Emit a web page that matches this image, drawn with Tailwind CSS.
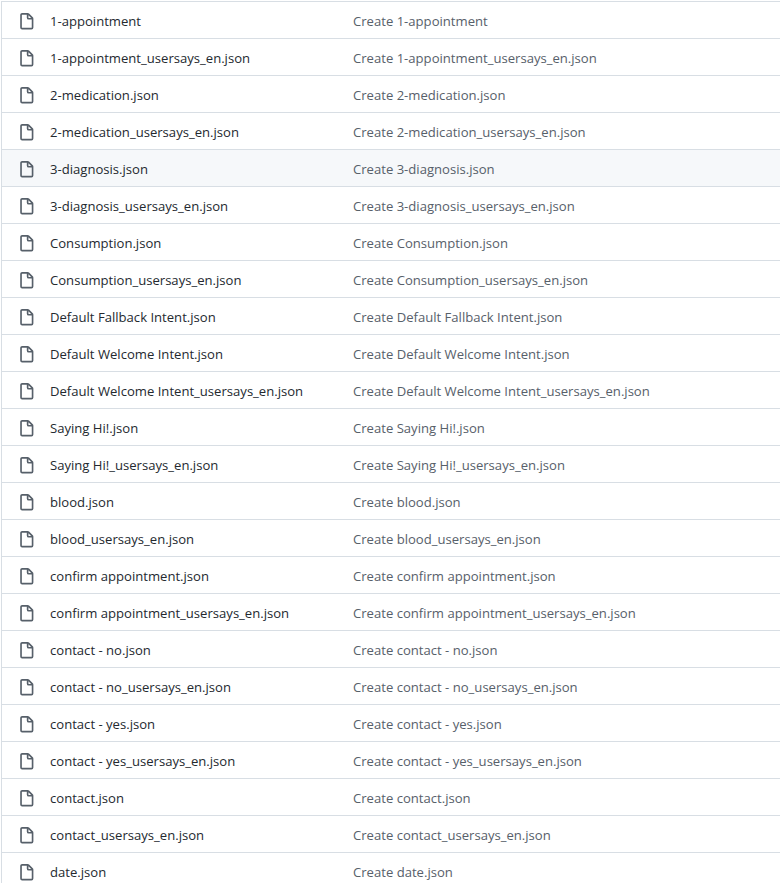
<!DOCTYPE html>
<html lang="en">
<head>
  <meta charset="UTF-8" />
  <title>Files</title>
  <script src="https://cdn.jsdelivr.net/npm/@tailwindcss/browser@4"></script>
</head>
<body class="bg-white font-['Open_Sans',sans-serif] text-[13.1px] overflow-hidden h-[883px]">
  <svg class="hidden"><symbol id="file" viewBox="0 0 16 16"><path fill="#57606a" d="M3.75 1.5a.25.25 0 00-.25.25v11.5c0 .138.112.25.25.25h8.5a.25.25 0 00.25-.25V6H9.75A1.75 1.75 0 018 4.25V1.5H3.75zm5.75.56v2.19c0 .138.112.25.25.25h2.19L9.5 2.06zM2 1.75C2 .784 2.784 0 3.75 0h5.086c.464 0 .909.184 1.237.513l3.414 3.414c.329.328.513.773.513 1.237v8.086A1.75 1.75 0 0112.25 15h-8.5A1.75 1.75 0 012 13.25V1.75z"/></symbol></svg>
  <div class="mt-px ml-px border-l border-t border-[#d8dee4]">
    <div class="flex items-center h-[37px] pt-[4px] border-b border-[#d8dee4]"><svg class="w-[17.6px] h-[17.6px] ml-4 shrink-0"><use href="#file"/></svg><span class="w-[317.4px] pl-[14.4px] text-[#24292f]">1-appointment</span><span class="text-[#57606a]">Create 1-appointment</span></div>
    <div class="flex items-center h-[37px] pt-[4px] border-b border-[#d8dee4]"><svg class="w-[17.6px] h-[17.6px] ml-4 shrink-0"><use href="#file"/></svg><span class="w-[317.4px] pl-[14.4px] text-[#24292f]">1-appointment_usersays_en.json</span><span class="text-[#57606a]">Create 1-appointment_usersays_en.json</span></div>
    <div class="flex items-center h-[37px] pt-[4px] border-b border-[#d8dee4]"><svg class="w-[17.6px] h-[17.6px] ml-4 shrink-0"><use href="#file"/></svg><span class="w-[317.4px] pl-[14.4px] text-[#24292f]">2-medication.json</span><span class="text-[#57606a]">Create 2-medication.json</span></div>
    <div class="flex items-center h-[37px] pt-[4px] border-b border-[#d8dee4]"><svg class="w-[17.6px] h-[17.6px] ml-4 shrink-0"><use href="#file"/></svg><span class="w-[317.4px] pl-[14.4px] text-[#24292f]">2-medication_usersays_en.json</span><span class="text-[#57606a]">Create 2-medication_usersays_en.json</span></div>
    <div class="flex items-center h-[37px] pt-[4px] border-b border-[#d8dee4] bg-[#f6f8fa]"><svg class="w-[17.6px] h-[17.6px] ml-4 shrink-0"><use href="#file"/></svg><span class="w-[317.4px] pl-[14.4px] text-[#24292f]">3-diagnosis.json</span><span class="text-[#57606a]">Create 3-diagnosis.json</span></div>
    <div class="flex items-center h-[37px] pt-[4px] border-b border-[#d8dee4]"><svg class="w-[17.6px] h-[17.6px] ml-4 shrink-0"><use href="#file"/></svg><span class="w-[317.4px] pl-[14.4px] text-[#24292f]">3-diagnosis_usersays_en.json</span><span class="text-[#57606a]">Create 3-diagnosis_usersays_en.json</span></div>
    <div class="flex items-center h-[37px] pt-[4px] border-b border-[#d8dee4]"><svg class="w-[17.6px] h-[17.6px] ml-4 shrink-0"><use href="#file"/></svg><span class="w-[317.4px] pl-[14.4px] text-[#24292f]">Consumption.json</span><span class="text-[#57606a]">Create Consumption.json</span></div>
    <div class="flex items-center h-[37px] pt-[4px] border-b border-[#d8dee4]"><svg class="w-[17.6px] h-[17.6px] ml-4 shrink-0"><use href="#file"/></svg><span class="w-[317.4px] pl-[14.4px] text-[#24292f]">Consumption_usersays_en.json</span><span class="text-[#57606a]">Create Consumption_usersays_en.json</span></div>
    <div class="flex items-center h-[37px] pt-[4px] border-b border-[#d8dee4]"><svg class="w-[17.6px] h-[17.6px] ml-4 shrink-0"><use href="#file"/></svg><span class="w-[317.4px] pl-[14.4px] text-[#24292f]">Default Fallback Intent.json</span><span class="text-[#57606a]">Create Default Fallback Intent.json</span></div>
    <div class="flex items-center h-[37px] pt-[4px] border-b border-[#d8dee4]"><svg class="w-[17.6px] h-[17.6px] ml-4 shrink-0"><use href="#file"/></svg><span class="w-[317.4px] pl-[14.4px] text-[#24292f]">Default Welcome Intent.json</span><span class="text-[#57606a]">Create Default Welcome Intent.json</span></div>
    <div class="flex items-center h-[37px] pt-[4px] border-b border-[#d8dee4]"><svg class="w-[17.6px] h-[17.6px] ml-4 shrink-0"><use href="#file"/></svg><span class="w-[317.4px] pl-[14.4px] text-[#24292f]">Default Welcome Intent_usersays_en.json</span><span class="text-[#57606a]">Create Default Welcome Intent_usersays_en.json</span></div>
    <div class="flex items-center h-[37px] pt-[4px] border-b border-[#d8dee4]"><svg class="w-[17.6px] h-[17.6px] ml-4 shrink-0"><use href="#file"/></svg><span class="w-[317.4px] pl-[14.4px] text-[#24292f]">Saying Hi!.json</span><span class="text-[#57606a]">Create Saying Hi!.json</span></div>
    <div class="flex items-center h-[37px] pt-[4px] border-b border-[#d8dee4]"><svg class="w-[17.6px] h-[17.6px] ml-4 shrink-0"><use href="#file"/></svg><span class="w-[317.4px] pl-[14.4px] text-[#24292f]">Saying Hi!_usersays_en.json</span><span class="text-[#57606a]">Create Saying Hi!_usersays_en.json</span></div>
    <div class="flex items-center h-[37px] pt-[4px] border-b border-[#d8dee4]"><svg class="w-[17.6px] h-[17.6px] ml-4 shrink-0"><use href="#file"/></svg><span class="w-[317.4px] pl-[14.4px] text-[#24292f]">blood.json</span><span class="text-[#57606a]">Create blood.json</span></div>
    <div class="flex items-center h-[37px] pt-[4px] border-b border-[#d8dee4]"><svg class="w-[17.6px] h-[17.6px] ml-4 shrink-0"><use href="#file"/></svg><span class="w-[317.4px] pl-[14.4px] text-[#24292f]">blood_usersays_en.json</span><span class="text-[#57606a]">Create blood_usersays_en.json</span></div>
    <div class="flex items-center h-[37px] pt-[4px] border-b border-[#d8dee4]"><svg class="w-[17.6px] h-[17.6px] ml-4 shrink-0"><use href="#file"/></svg><span class="w-[317.4px] pl-[14.4px] text-[#24292f]">confirm appointment.json</span><span class="text-[#57606a]">Create confirm appointment.json</span></div>
    <div class="flex items-center h-[37px] pt-[4px] border-b border-[#d8dee4]"><svg class="w-[17.6px] h-[17.6px] ml-4 shrink-0"><use href="#file"/></svg><span class="w-[317.4px] pl-[14.4px] text-[#24292f]">confirm appointment_usersays_en.json</span><span class="text-[#57606a]">Create confirm appointment_usersays_en.json</span></div>
    <div class="flex items-center h-[37px] pt-[4px] border-b border-[#d8dee4]"><svg class="w-[17.6px] h-[17.6px] ml-4 shrink-0"><use href="#file"/></svg><span class="w-[317.4px] pl-[14.4px] text-[#24292f]">contact - no.json</span><span class="text-[#57606a]">Create contact - no.json</span></div>
    <div class="flex items-center h-[37px] pt-[4px] border-b border-[#d8dee4]"><svg class="w-[17.6px] h-[17.6px] ml-4 shrink-0"><use href="#file"/></svg><span class="w-[317.4px] pl-[14.4px] text-[#24292f]">contact - no_usersays_en.json</span><span class="text-[#57606a]">Create contact - no_usersays_en.json</span></div>
    <div class="flex items-center h-[37px] pt-[4px] border-b border-[#d8dee4]"><svg class="w-[17.6px] h-[17.6px] ml-4 shrink-0"><use href="#file"/></svg><span class="w-[317.4px] pl-[14.4px] text-[#24292f]">contact - yes.json</span><span class="text-[#57606a]">Create contact - yes.json</span></div>
    <div class="flex items-center h-[37px] pt-[4px] border-b border-[#d8dee4]"><svg class="w-[17.6px] h-[17.6px] ml-4 shrink-0"><use href="#file"/></svg><span class="w-[317.4px] pl-[14.4px] text-[#24292f]">contact - yes_usersays_en.json</span><span class="text-[#57606a]">Create contact - yes_usersays_en.json</span></div>
    <div class="flex items-center h-[37px] pt-[4px] border-b border-[#d8dee4]"><svg class="w-[17.6px] h-[17.6px] ml-4 shrink-0"><use href="#file"/></svg><span class="w-[317.4px] pl-[14.4px] text-[#24292f]">contact.json</span><span class="text-[#57606a]">Create contact.json</span></div>
    <div class="flex items-center h-[37px] pt-[4px] border-b border-[#d8dee4]"><svg class="w-[17.6px] h-[17.6px] ml-4 shrink-0"><use href="#file"/></svg><span class="w-[317.4px] pl-[14.4px] text-[#24292f]">contact_usersays_en.json</span><span class="text-[#57606a]">Create contact_usersays_en.json</span></div>
    <div class="flex items-center h-[37px] pt-[4px] border-b border-[#d8dee4]"><svg class="w-[17.6px] h-[17.6px] ml-4 shrink-0"><use href="#file"/></svg><span class="w-[317.4px] pl-[14.4px] text-[#24292f]">date.json</span><span class="text-[#57606a]">Create date.json</span></div>
  </div>
</body>
</html>
